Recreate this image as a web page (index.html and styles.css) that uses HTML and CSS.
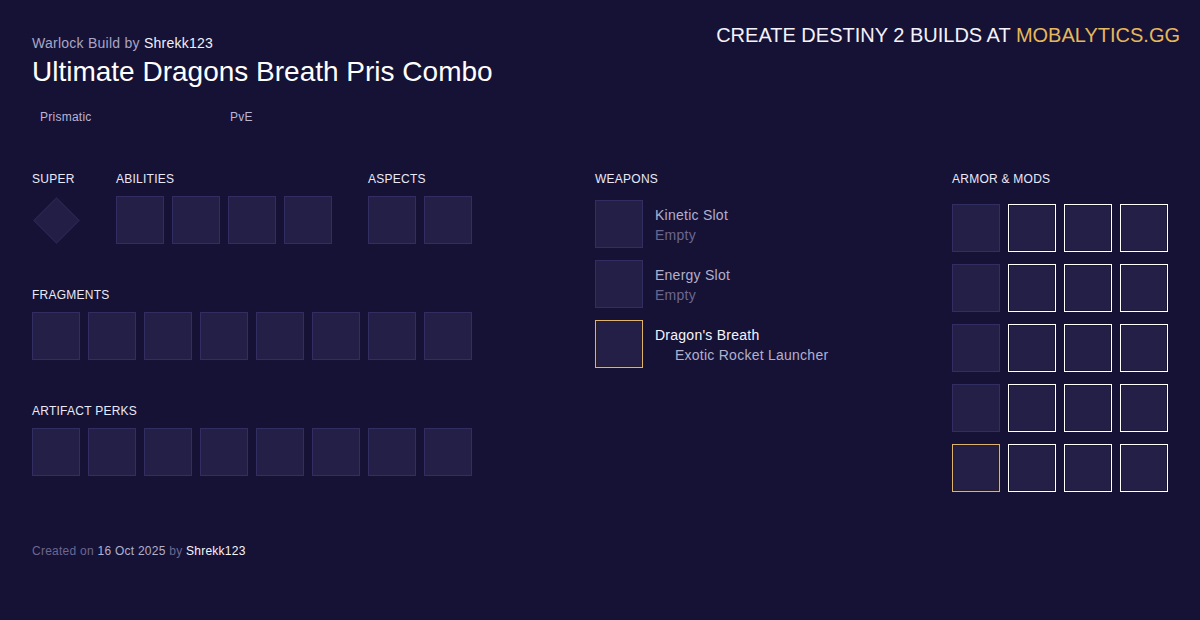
FILE: index.html
```html
<!DOCTYPE html>
<html>
<head>
<meta charset="utf-8">
<link rel="stylesheet" href="styles.css">
</head>
<body>
<div class="page">
  <header class="header">
    <div class="intro">
      <div class="byline">Warlock Build by <span class="author">Shrekk123</span></div>
      <h1 class="title">Ultimate Dragons Breath Pris Combo</h1>
      <div class="tags">
        <span class="tag">Prismatic</span>
        <span class="tag">PvE</span>
      </div>
    </div>
    <div class="promo">CREATE DESTINY 2 BUILDS AT <span class="brand">MOBALYTICS.GG</span></div>
  </header>

  <main class="main">
    <section class="col-left">
      <div class="row">
        <div class="group">
          <div class="label">SUPER</div>
          <div class="super-slot"><div class="diamond"></div></div>
        </div>
        <div class="group">
          <div class="label">ABILITIES</div>
          <div class="slots">
            <div class="slot"></div><div class="slot"></div><div class="slot"></div><div class="slot"></div>
          </div>
        </div>
        <div class="group">
          <div class="label">ASPECTS</div>
          <div class="slots">
            <div class="slot"></div><div class="slot"></div>
          </div>
        </div>
      </div>
      <div class="group block">
        <div class="label">FRAGMENTS</div>
        <div class="slots">
          <div class="slot"></div><div class="slot"></div><div class="slot"></div><div class="slot"></div>
          <div class="slot"></div><div class="slot"></div><div class="slot"></div><div class="slot"></div>
        </div>
      </div>
      <div class="group block">
        <div class="label">ARTIFACT PERKS</div>
        <div class="slots">
          <div class="slot"></div><div class="slot"></div><div class="slot"></div><div class="slot"></div>
          <div class="slot"></div><div class="slot"></div><div class="slot"></div><div class="slot"></div>
        </div>
      </div>
    </section>

    <section class="col-weapons">
      <div class="label">WEAPONS</div>
      <div class="weapons">
        <div class="weapon">
          <div class="slot"></div>
          <div class="winfo">
            <div class="wname">Kinetic Slot</div>
            <div class="wsub empty">Empty</div>
          </div>
        </div>
        <div class="weapon">
          <div class="slot"></div>
          <div class="winfo">
            <div class="wname">Energy Slot</div>
            <div class="wsub empty">Empty</div>
          </div>
        </div>
        <div class="weapon">
          <div class="slot exotic"></div>
          <div class="winfo">
            <div class="wname filled">Dragon's Breath</div>
            <div class="wsub type">Exotic Rocket Launcher</div>
          </div>
        </div>
      </div>
    </section>

    <section class="col-armor">
      <div class="label">ARMOR &amp; MODS</div>
      <div class="armor-grid">
        <div class="slot"></div><div class="slot mod"></div><div class="slot mod"></div><div class="slot mod"></div>
        <div class="slot"></div><div class="slot mod"></div><div class="slot mod"></div><div class="slot mod"></div>
        <div class="slot"></div><div class="slot mod"></div><div class="slot mod"></div><div class="slot mod"></div>
        <div class="slot"></div><div class="slot mod"></div><div class="slot mod"></div><div class="slot mod"></div>
        <div class="slot exotic"></div><div class="slot mod"></div><div class="slot mod"></div><div class="slot mod"></div>
      </div>
    </section>
  </main>

  <footer class="footer">
    <span class="dim">Created on</span> <span class="mid">16 Oct 2025</span> <span class="dim">by</span> <span class="bright">Shrekk123</span>
  </footer>
</div>
</body>
</html>
```

FILE: styles.css
```css
* { box-sizing: border-box; }
html, body {
  margin: 0;
  padding: 0;
  background: #151236;
  width: 1200px;
  height: 620px;
  overflow: hidden;
}
body {
  font-family: "Liberation Sans", Arial, sans-serif;
  color: #ffffff;
}
.page {
  padding: 23px 20px 0 32px;
}
.header {
  display: flex;
  justify-content: space-between;
  align-items: flex-start;
}
.intro {
  padding-top: 10px;
}
.byline {
  font-size: 14px;
  line-height: 20px;
  color: #a9a5c6;
  letter-spacing: 0.25px;
}
.author { color: #f1eff9; }
.title {
  margin: 1px 0 0 0;
  font-size: 28px;
  line-height: 36px;
  font-weight: normal;
  color: #ffffff;
}
.tags {
  display: flex;
  margin-top: 14px;
}
.tag {
  width: 190px;
  padding: 5px 8px 3px;
  font-size: 12px;
  line-height: 16px;
  color: #b9b5d3;
  letter-spacing: 0.25px;
}
.promo {
  font-size: 20px;
  line-height: 24px;
  color: #f4f2fb;
}
.brand { color: #e6b85a; }

.main {
  display: flex;
  margin-top: 44px;
}
.label {
  font-size: 12px;
  line-height: 16px;
  color: #ebe9f7;
  margin-bottom: 8px;
  letter-spacing: 0.25px;
  position: relative;
  top: -1px;
}
.col-left { width: 563px; }
.row {
  display: flex;
  gap: 36px;
}
.block { margin-top: 44px; }
.slots {
  display: flex;
  gap: 8px;
}
.slot {
  width: 48px;
  height: 48px;
  flex: none;
  background: #231f46;
  border: 1px solid #332e62;
}
.super-slot {
  width: 48px;
  height: 48px;
  display: flex;
  align-items: center;
  justify-content: center;
}
.diamond {
  width: 33px;
  height: 33px;
  background: #221e45;
  border: 1px solid #2a2654;
  transform: rotate(45deg);
}

.col-weapons { width: 357px; }
.col-weapons .label { margin-bottom: 12px; }
.weapons {
  display: flex;
  flex-direction: column;
  gap: 12px;
}
.weapon {
  display: flex;
  align-items: center;
  gap: 12px;
}
.winfo {
  font-size: 14px;
  line-height: 20px;
  letter-spacing: 0.25px;
  padding-top: 2px;
}
.wname { color: #b3afcd; }
.wname.filled { color: #f6f5fc; }
.wsub.empty { color: #6c678f; }
.wsub.type { color: #b3afcd; padding-left: 20px; }
.slot.exotic {
  border: 1px solid #e0b36a;
  box-shadow: inset 0 0 0 1px #2a1d22;
}

.col-armor { flex: 1; }
.col-armor .label { margin-bottom: 16px; }
.armor-grid {
  display: grid;
  grid-template-columns: repeat(4, 48px);
  column-gap: 8px;
  row-gap: 12px;
}
.slot.mod {
  border: 1px solid #ffffff;
  box-shadow: inset 0 0 0 1px #1b1838;
}

.footer {
  margin-top: 51px;
  font-size: 12px;
  line-height: 16px;
  letter-spacing: 0.25px;
}
.dim { color: #6c678f; }
.mid { color: #b3afcd; }
.bright { color: #f6f5fc; }
```
